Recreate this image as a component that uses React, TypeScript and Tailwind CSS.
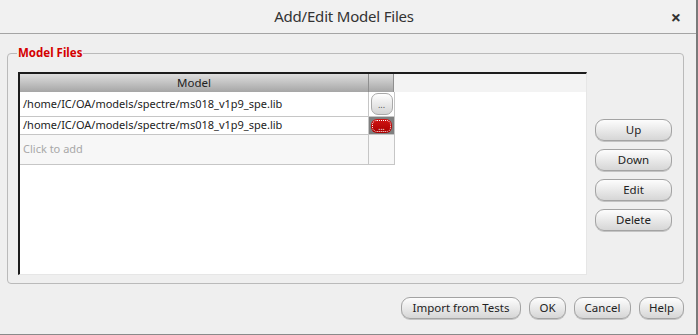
import React from "react";

const files = [
  "/home/IC/OA/models/spectre/ms018_v1p9_spe.lib",
  "/home/IC/OA/models/spectre/ms018_v1p9_spe.lib",
];

function Btn({ label, w }: { label: string; w: string }) {
  return (
    <button
      className={`${w} h-[22px] rounded-[9px] border border-[#a3a3a3] bg-gradient-to-b from-[#fdfdfd] to-[#d6d6d6] text-[11.5px] leading-none text-[#222] shadow-[0_1px_0_#c4c4c4]`}
    >
      {label}
    </button>
  );
}

export default function App() {
  return (
    <div
      className="w-[698px] h-[335px] bg-[#efefef] border-r-2 border-b border-r-[#7a7a7a] border-b-[#8a8a8a] flex flex-col text-[#222]"
      style={{ fontFamily: '"Noto Sans", "Open Sans", sans-serif' }}
    >
      {/* Title bar */}
      <div className="h-[34px] flex items-center border-b border-[#a4a4a4] bg-[#f1f1f1] shrink-0">
        <div className="w-[32px]" />
        <div className="flex-1 text-center text-[15px] text-[#333] tracking-[-0.2px]">
          Add/Edit Model Files
        </div>
        <div className="w-[40px] text-center text-[18px] font-bold text-[#333] leading-none">×</div>
      </div>

      {/* Group box */}
      <fieldset className="ml-[7px] mt-[11px] w-[677px] h-[239px] border border-[#bababa] rounded-[4px] px-0 pb-[7px] flex">
        <legend className="ml-[9px] px-[1px] text-[11.5px] font-bold text-[#d40000] leading-[16px]">
          Model Files
        </legend>
        <div className="flex mt-[11px] w-full">
          {/* Table panel */}
          <div className="ml-[10px] w-[569px] h-[203px] border-t-2 border-l-2 border-t-[#1c1c1c] border-l-[#1c1c1c] border-r border-b border-r-[#e6e6e6] border-b-[#e6e6e6] bg-white flex flex-col">
            <div className="flex h-[18px] bg-[#f3f3f3]">
              <div className="w-[349px] border-r border-[#8e8e8e] bg-gradient-to-b from-[#dedede] to-[#a6a6a6] flex items-center justify-center text-[11.5px] text-[#222]">
                Model
              </div>
              <div className="w-[25px] border-r border-[#8e8e8e] bg-gradient-to-b from-[#dedede] to-[#a6a6a6]" />
            </div>
            {files.map((f, i) => (
              <div
                key={i}
                className={`flex border-b border-[#c6c6c6] w-[375px] ${i === 0 ? "h-[25px]" : "h-[18px]"}`}
              >
                <div className="w-[349px] border-r border-[#c6c6c6] flex items-center pl-[3px] text-[11px] text-[#222]">
                  {f}
                </div>
                <div
                  className={`w-[26px] border-r border-[#c6c6c6] flex items-center justify-center ${i === 1 ? "bg-[#7f7f7f]" : ""}`}
                >
                  {i === 0 ? (
                    <div className="w-[22px] h-[22px] rounded-[7px] border border-[#a9a9a9] bg-gradient-to-b from-white to-[#d4d4d4] flex items-center justify-center text-[9px] text-[#555] leading-none">
                      ...
                    </div>
                  ) : (
                    <div className="w-[21px] h-[14px] rounded-[6px] bg-gradient-to-b from-[#d21414] to-[#a80000] p-[1px]">
                      <div className="w-full h-full rounded-[5px] border border-dotted border-white flex items-end justify-center text-[8px] text-white leading-[8px]">
                        ...
                      </div>
                    </div>
                  )}
                </div>
              </div>
            ))}
            <div className="flex h-[30px] border-b border-[#c6c6c6] w-[375px] bg-[#f7f7f7]">
              <div className="w-[349px] border-r border-[#c6c6c6] flex items-center pl-[3px] text-[11px] text-[#a8a8a8]">
                Click to add
              </div>
              <div className="w-[26px] border-r border-[#c6c6c6]" />
            </div>
          </div>

          {/* Side buttons */}
          <div className="ml-[8px] mt-[47px] flex flex-col gap-2">
            <Btn label="Up" w="w-[77px]" />
            <Btn label="Down" w="w-[77px]" />
            <Btn label="Edit" w="w-[77px]" />
            <Btn label="Delete" w="w-[77px]" />
          </div>
        </div>
      </fieldset>

      {/* Bottom buttons */}
      <div className="flex justify-end gap-2 mt-[13px] pr-[12px]">
        <Btn label="Import from Tests" w="w-[120px]" />
        <Btn label="OK" w="w-[37px]" />
        <Btn label="Cancel" w="w-[57px]" />
        <Btn label="Help" w="w-[45px]" />
      </div>
    </div>
  );
}
